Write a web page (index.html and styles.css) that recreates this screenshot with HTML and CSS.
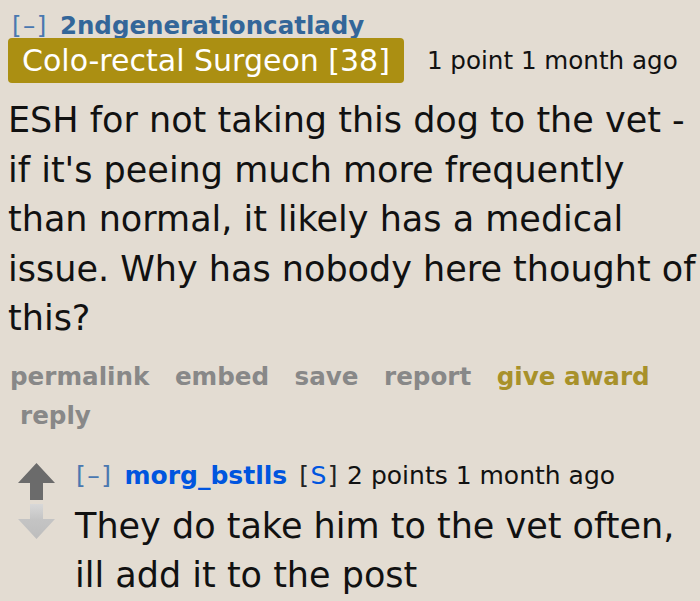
FILE: index.html
```html
<!DOCTYPE html>
<html lang="en">
<head>
<meta charset="utf-8">
<title>Comment</title>
<link rel="stylesheet" href="styles.css">
</head>
<body>
<div class="comment">
  <p class="tagline"><a class="expand">[–]</a><a class="author">2ndgenerationcatlady</a></p>
  <div class="flair-row">
    <span class="flair">Colo-rectal Surgeon [38]</span>
    <span class="score">1 point 1 month ago</span>
  </div>
  <div class="md">
    <p>ESH for not taking this dog to the vet - if it's peeing much more frequently than normal, it likely has a medical issue. Why has nobody here thought of this?</p>
  </div>
  <ul class="buttons">
    <li>permalink</li>
    <li>embed</li>
    <li>save</li>
    <li>report</li>
    <li class="award">give award</li>
    <li class="reply">reply</li>
  </ul>
  <div class="child">
    <div class="midcol">
      <svg class="arrow" width="38" height="37" viewBox="0 0 38 37"><polygon points="18.5,0 37,20 25,20 25,37 12,37 12,20 0,20" fill="#6b6b6b"/></svg>
      <svg class="arrow down" width="38" height="36" viewBox="0 0 38 36"><defs><linearGradient id="dg" x1="0" y1="0" x2="0" y2="1"><stop offset="0" stop-color="#d8d8d8"/><stop offset="0.45" stop-color="#c4c4c4"/><stop offset="1" stop-color="#bdbdbd"/></linearGradient></defs><polygon points="12,0 25,0 25,15 37,15 18.5,35 0,15 12,15" fill="url(#dg)"/></svg>
    </div>
    <div class="entry">
      <p class="tagline small"><a class="expand">[–]</a><a class="author op">morg_bstlls</a><span class="submitter">[<span class="s">S</span>]</span> <span class="meta">2 points 1 month ago</span></p>
      <div class="md">
        <p>They do take him to the vet often, ill add it to the post</p>
      </div>
    </div>
  </div>
</div>
</body>
</html>
```

FILE: styles.css
```css
html, body {
  margin: 0;
  padding: 0;
  background: #e3dcd2;
}

body {
  font-family: "DejaVu Sans", Verdana, sans-serif;
  color: #111;
  width: 700px;
  height: 601px;
  overflow: hidden;
}

.comment {
  padding: 14px 0 0 8px;
}

.tagline {
  margin: 0;
  padding-left: 4px;
  font-size: 24.5px;
  line-height: 24px;
  white-space: nowrap;
}

.expand {
  color: #4a78b0;
  letter-spacing: 1.5px;
  margin-right: 12px;
}

.author {
  color: #336699;
  font-weight: bold;
}

.flair-row {
  display: flex;
  align-items: center;
  height: 45px;
}

.flair {
  display: inline-block;
  background: #ab8f12;
  color: #fff;
  font-size: 30px;
  line-height: 45px;
  height: 45px;
  padding: 0 14px 0 14px;
  border-radius: 4px;
}

.score {
  margin-left: 23px;
  font-size: 24.6px;
  color: #111;
}

.md {
  font-size: 35px;
  line-height: 49.5px;
}

.md p {
  margin: 0;
}

.comment > .md {
  margin-top: 13px;
  width: 690px;
}

.buttons {
  list-style: none;
  margin: 13px 0 0 0;
  padding: 0 0 0 2px;
  display: flex;
  flex-wrap: wrap;
  column-gap: 25.5px;
  font-size: 24.6px;
  line-height: 39px;
  font-weight: bold;
  color: #888;
  width: 680px;
}

.buttons .award {
  color: #a8912a;
}

.buttons .reply {
  padding-left: 10px;
}

.child {
  display: flex;
  margin-top: 26px;
}

.midcol {
  margin-left: 10px;
  width: 38px;
  display: flex;
  flex-direction: column;
  padding-top: 2px;
}

.arrow {
  display: block;
}

.arrow.down {
  margin-top: 4px;
}

.entry {
  margin-left: 19px;
}

.tagline.small {
  padding-left: 1px;
  font-size: 25px;
  line-height: 30px;
}

.tagline.small .expand {
  margin-right: 12px;
}

.author.op {
  color: #0055df;
  margin-right: 12px;
}

.submitter {
  color: #222;
  letter-spacing: 1.5px;
}

.submitter .s {
  color: #0055df;
}

.meta {
  color: #111;
}

.entry .md {
  margin-top: 11px;
}
```
